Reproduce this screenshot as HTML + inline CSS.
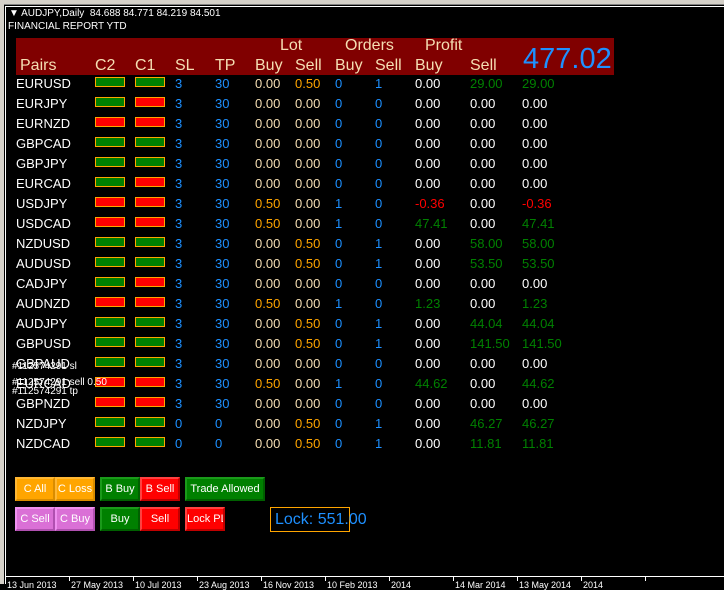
<!DOCTYPE html>
<html><head><meta charset="utf-8"><style>
*{margin:0;padding:0;box-sizing:border-box}
body{width:724px;height:584px;background:#000;position:relative;overflow:hidden;font-family:"Liberation Sans",sans-serif;color:#fff}
.a{position:absolute;white-space:nowrap}
.t{position:absolute;white-space:nowrap;font-size:13px;line-height:20px}
.bx{position:absolute;width:30px;height:10px;border:1px solid #ffa500}
.g{background:#008000}.r{background:#f00}
.w{color:#f5deb3}.o{color:#ffa500}.b{color:#1e90ff}.gr{color:#008000}.rd{color:#f00}
.h{position:absolute;white-space:nowrap;font-size:16px;color:#f5deb3;line-height:18px}
.btn{position:absolute;height:24px;font-size:11px;color:#fff;text-align:center;line-height:20px;border:2px solid;white-space:nowrap;overflow:hidden}
.bo{background:#ffa500;border-color:#ffb733 #d98c00 #d98c00 #ffb733}
.bg{background:#008000;border-color:#1a9a1a #006000 #006000 #1a9a1a}
.br{background:#f00;border-color:#ff4040 #c00000 #c00000 #ff4040}
.bp{background:#da70d6;border-color:#f090f0 #b050b0 #b050b0 #f090f0}
.sm{position:absolute;font-size:10px;white-space:nowrap;line-height:10px}
</style></head><body>
<div class="a" style="left:0;top:0;width:724px;height:4px;background:#d4d0c8"></div>
<div class="a" style="left:0;top:4px;width:724px;height:1px;background:#808080"></div>
<div class="a" style="left:0;top:0;width:4px;height:584px;background:#d4d0c8"></div>
<div class="a" style="left:5px;top:6px;width:719px;height:1px;background:#fff"></div>
<div class="a" style="left:5px;top:6px;width:1px;height:578px;background:#fff"></div>
<div class="a" style="left:5px;top:576px;width:719px;height:1px;background:#fff"></div>
<div class="a" style="left:9px;top:8px;font-size:10px;line-height:12px">&#9660; AUDJPY,Daily&nbsp; 84.688 84.771 84.219 84.501</div>
<div class="a" style="left:8px;top:21px;font-size:10px;line-height:12px">FINANCIAL REPORT YTD</div>
<div class="a" style="left:16px;top:38px;width:598px;height:37px;background:#800000"></div>
<div class="h" style="left:280px;top:37px">Lot</div>
<div class="h" style="left:345px;top:37px">Orders</div>
<div class="h" style="left:425px;top:37px">Profit</div>
<div class="h" style="left:20px;top:57px">Pairs</div>
<div class="h" style="left:95px;top:57px">C2</div>
<div class="h" style="left:135px;top:57px">C1</div>
<div class="h" style="left:175px;top:57px">SL</div>
<div class="h" style="left:215px;top:57px">TP</div>
<div class="h" style="left:255px;top:57px">Buy</div>
<div class="h" style="left:295px;top:57px">Sell</div>
<div class="h" style="left:335px;top:57px">Buy</div>
<div class="h" style="left:375px;top:57px">Sell</div>
<div class="h" style="left:415px;top:57px">Buy</div>
<div class="h" style="left:470px;top:57px">Sell</div>
<div class="a" style="left:523px;top:42px;font-size:29px;line-height:34px;color:#1e90ff">477.02</div>
<div id="rows"></div>
<script>
var d=[
["EURUSD","g","g",3,30,"0.00","0.50",0,1,"0.00","29.00","29.00"],
["EURJPY","g","r",3,30,"0.00","0.00",0,0,"0.00","0.00","0.00"],
["EURNZD","r","r",3,30,"0.00","0.00",0,0,"0.00","0.00","0.00"],
["GBPCAD","g","g",3,30,"0.00","0.00",0,0,"0.00","0.00","0.00"],
["GBPJPY","g","g",3,30,"0.00","0.00",0,0,"0.00","0.00","0.00"],
["EURCAD","g","r",3,30,"0.00","0.00",0,0,"0.00","0.00","0.00"],
["USDJPY","r","r",3,30,"0.50","0.00",1,0,"-0.36","0.00","-0.36"],
["USDCAD","r","r",3,30,"0.50","0.00",1,0,"47.41","0.00","47.41"],
["NZDUSD","g","g",3,30,"0.00","0.50",0,1,"0.00","58.00","58.00"],
["AUDUSD","g","g",3,30,"0.00","0.50",0,1,"0.00","53.50","53.50"],
["CADJPY","g","r",3,30,"0.00","0.00",0,0,"0.00","0.00","0.00"],
["AUDNZD","r","r",3,30,"0.50","0.00",1,0,"1.23","0.00","1.23"],
["AUDJPY","g","g",3,30,"0.00","0.50",0,1,"0.00","44.04","44.04"],
["GBPUSD","g","g",3,30,"0.00","0.50",0,1,"0.00","141.50","141.50"],
["GBPAUD","g","g",3,30,"0.00","0.00",0,0,"0.00","0.00","0.00"],
["EURCAD","r","r",3,30,"0.50","0.00",1,0,"44.62","0.00","44.62"],
["GBPNZD","r","r",3,30,"0.00","0.00",0,0,"0.00","0.00","0.00"],
["NZDJPY","g","g",0,0,"0.00","0.50",0,1,"0.00","46.27","46.27"],
["NZDCAD","g","g",0,0,"0.00","0.50",0,1,"0.00","11.81","11.81"]];
function pc(v){var n=parseFloat(v);return n>0?"gr":n<0?"rd":"";}
var h="";
d.forEach(function(r,i){var y=74+20*i;
h+='<div class="t" style="left:16px;top:'+y+'px">'+r[0]+'</div>';
h+='<div class="bx '+r[1]+'" style="left:95px;top:'+(y+3)+'px"></div>';
h+='<div class="bx '+r[2]+'" style="left:135px;top:'+(y+3)+'px"></div>';
h+='<div class="t b" style="left:175px;top:'+y+'px">'+r[3]+'</div>';
h+='<div class="t b" style="left:215px;top:'+y+'px">'+r[4]+'</div>';
h+='<div class="t '+(r[5]=="0.00"?"w":"o")+'" style="left:255px;top:'+y+'px">'+r[5]+'</div>';
h+='<div class="t '+(r[6]=="0.00"?"w":"o")+'" style="left:295px;top:'+y+'px">'+r[6]+'</div>';
h+='<div class="t b" style="left:335px;top:'+y+'px">'+r[7]+'</div>';
h+='<div class="t b" style="left:375px;top:'+y+'px">'+r[8]+'</div>';
h+='<div class="t '+pc(r[9])+'" style="left:415px;top:'+y+'px">'+r[9]+'</div>';
h+='<div class="t '+pc(r[10])+'" style="left:470px;top:'+y+'px">'+r[10]+'</div>';
h+='<div class="t '+pc(r[11])+'" style="left:522px;top:'+y+'px">'+r[11]+'</div>';
});
document.getElementById("rows").innerHTML=h;
</script>
<div class="sm" style="left:12px;top:362px">#112574291 sl</div>
<div class="sm" style="left:12px;top:378px">#112574291 sell 0.50</div>
<div class="sm" style="left:12px;top:387px">#112574291 tp</div>
<div class="btn bo" style="left:15px;top:477px;width:40px">C All</div>
<div class="btn bo" style="left:55px;top:477px;width:40px">C Loss</div>
<div class="btn bg" style="left:100px;top:477px;width:40px">B Buy</div>
<div class="btn br" style="left:140px;top:477px;width:40px">B Sell</div>
<div class="btn bg" style="left:185px;top:477px;width:80px">Trade Allowed</div>
<div class="btn bp" style="left:15px;top:507px;width:40px">C Sell</div>
<div class="btn bp" style="left:55px;top:507px;width:40px">C Buy</div>
<div class="btn bg" style="left:100px;top:507px;width:40px">Buy</div>
<div class="btn br" style="left:140px;top:507px;width:40px">Sell</div>
<div class="btn br" style="left:185px;top:507px;width:40px">Lock PL</div>
<div class="a" style="left:270px;top:507px;width:80px;height:25px;border:1px solid #ffa500"></div>
<div class="a" style="left:275px;top:508px;font-size:16px;line-height:24px;color:#1e90ff">Lock: 551.00</div>
<div id="ax"></div>
<script>
var l=["13 Jun 2013","27 May 2013","10 Jul 2013","23 Aug 2013","16 Nov 2013","10 Feb 2013","2014","14 Mar 2014","13 May 2014","2014"];
var s="";for(var i=0;i<11;i++){var x=5+64*i;s+='<div class="a" style="left:'+x+'px;top:576px;width:1px;height:5px;background:#fff"></div>';
if(i<10)s+='<div class="a" style="left:'+(x+2)+'px;top:580px;font-size:9px;line-height:10px">'+l[i]+'</div>';}
document.getElementById("ax").innerHTML=s;
</script>
</body></html>
